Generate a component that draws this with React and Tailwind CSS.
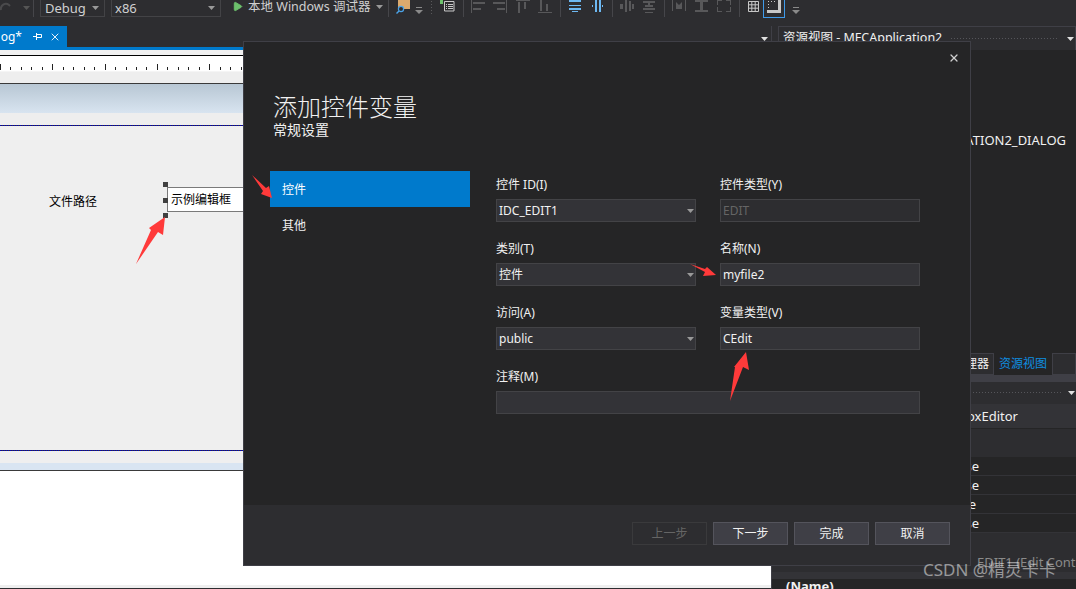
import React from 'react';
import { Play, X } from 'lucide-react';

const Caret = ({ className = '' }) => (
  <svg width="7" height="4" viewBox="0 0 7 4" className={className}>
    <path d="M0 0h7L3.500 4z" fill="currentColor" />
  </svg>
);

const Sep = ({ ml }) => <div className={`w-px h-[17px] bg-[#46464a] shrink-0 ${ml}`} />;

const OverflowCaret = ({ ml }) => (
  <svg width="8" height="8" viewBox="0 0 8 8" className={`shrink-0 mt-[7px] ${ml}`}>
    <path d="M1 0h6v1H1zM0 3h8L4 7z" fill="#8a8a8a" />
  </svg>
);

// toolbar layout glyphs, everything greyed out except the two blue ones
const Glyph = ({ ml, w = 14, color = '#58585a', children }) => (
  <svg width={w} height="17" viewBox={`0 0 ${w} 17`} fill={color} className={`shrink-0 ${ml}`}>
    {children}
  </svg>
);

const Gripper = ({ className = '' }) => (
  <div className={`h-[4px] bg-[radial-gradient(#55555a_1px,transparent_1px)] bg-[length:3px_3px] ${className}`} />
);

const Toolbar = () => (
  <div className="h-[26px] flex items-start text-[#d0d0d0] text-[13px] overflow-hidden">
    <svg width="12" height="12" viewBox="0 0 12 12" className="shrink-0 mt-[1px]" fill="none" stroke="#4a4a4c" strokeWidth="2">
      <path d="M1 9a5 5 0 0 1 8-5l1 1" />
    </svg>
    <Caret className="text-[#555] ml-[11px] mt-[6px] shrink-0" />
    <Sep ml="ml-[3px]" />
    <div className="ml-[6px] w-[65px] h-[17px] border border-[#434346] border-t-0 flex items-center justify-between px-[4px] shrink-0 leading-none">
      <span>Debug</span>
      <Caret className="text-[#999] mr-[1px]" />
    </div>
    <div className="ml-[6px] w-[110px] h-[17px] border border-[#434346] border-t-0 flex items-center justify-between px-[3px] shrink-0 leading-none">
      <span>x86</span>
      <Caret className="text-[#999] mr-[2px]" />
    </div>
    <Play size={11} className="ml-[11px] mt-[1px] shrink-0 text-[#6cc06c]" fill="#6cc06c" />
    <span className="ml-[5px] text-[12.500px] leading-[13px] whitespace-nowrap w-[122px] shrink-0">本地 Windows 调试器</span>
    <Caret className="ml-[6px] mt-[5px] text-[#999] shrink-0" />
    <Sep ml="ml-[5px]" />
    <svg width="14" height="15" viewBox="0 0 14 15" className="ml-[7px] shrink-0">
      <path d="M2 0h12v9H2z" fill="#dcaa6e" />
      <circle cx="5" cy="9" r="2.600" fill="#2d2d30" stroke="#4ba3e8" strokeWidth="1.200" />
      <path d="M3 11l-2.500 2.500" stroke="#4ba3e8" strokeWidth="1.400" />
    </svg>
    <OverflowCaret ml="ml-[5px]" />
    <svg width="5" height="17" viewBox="0 0 5 17" className="ml-[7px] shrink-0">
      {[1, 4, 7, 10, 13].map((y) => (
        <rect key={y} x="1" y={y} width="1" height="1" fill="#5a5a5c" />
      ))}
    </svg>
    <svg width="15" height="13" viewBox="0 0 15 13" className="ml-[5px] shrink-0">
      <path d="M0 0h3v4H0z" fill="#6cc06c" />
      <path d="M4.500 1.500h9.500v9.500H4.500z" fill="none" stroke="#c8c8c8" />
      <path d="M6 4h1v1H6zM8 4h5v1H8zM6 6h1v1H6zM8 6h5v1H8zM6 8h1v1H6zM8 8h5v1H8z" fill="#c8c8c8" />
    </svg>
    <Sep ml="ml-[8px]" />
    <Glyph ml="ml-[7px]"><path d="M0 0h1v13H0zM2 2h12v2H2zM2 8h8v2H2z" /></Glyph>
    <Glyph ml="ml-[8px]"><path d="M13 0h1v13h-1zM0 2h12v2H0zM4 8h8v2H4z" /></Glyph>
    <Glyph ml="ml-[9px]"><path d="M0 0h14v1H0zM2 2h2v11H2zM8 2h2v7H8z" /></Glyph>
    <Glyph ml="ml-[8px]"><path d="M0 12h14v1H0zM2 0h2v11H2zM8 4h2v7H8z" /></Glyph>
    <Sep ml="ml-[8px]" />
    <Glyph ml="ml-[8px]" w={12} color="#6db8f2"><path d="M0 0h12v2H0zM0 5h12v1H0zM0 8h12v2H0zM3 11h6v1H3z" /></Glyph>
    <Glyph ml="ml-[11px]" w={11} color="#6db8f2"><path d="M3 0h2v12H3zM7 0h2v12H7zM0 5h1v2H0zM10 5h1v2h-1z" /></Glyph>
    <Sep ml="ml-[9px]" />
    <Glyph ml="ml-[7px]"><path d="M0 4h3v5H0zM5 0h2v12H5zM9 1h2v10H9zM12 4h2v5h-2z" /></Glyph>
    <Glyph ml="ml-[9px]" w={12}><path d="M0 1h12v2H0zM5 3h2v2H5zM2 5h8v2H2zM0 8h12v2H0zM2 12h8v1H2z" /></Glyph>
    <Sep ml="ml-[9px]" />
    <Glyph ml="ml-[7px]"><path d="M0 0h1v11H0zM13 0h1v11h-1zM4 2l3 3 3-3v7H4z" /></Glyph>
    <Glyph ml="ml-[9px]"><path d="M0 0h13v2H0zM0 10h13v2H0zM5 2h3v8H5z" /></Glyph>
    <Glyph ml="ml-[8px]"><path d="M0 0h5v1H1v4H0zM9 0h5v5h-1V1H9zM0 7h1v4h4v1H0zM13 7h1v5H9v-1h4z" /></Glyph>
    <Sep ml="ml-[8px]" />
    <svg width="11" height="11" viewBox="0 0 11 11" className="ml-[8px] mt-[1px] shrink-0">
      <path d="M.5.500h10v10H.500zM.5 3.800h10M.5 7.200h10M3.800.500v10M7.200.500v10" fill="none" stroke="#c8c8c8" />
    </svg>
    <div className="ml-[4px] w-[22px] h-[18px] border border-[#3f9bea] border-t-0 flex items-start justify-center shrink-0">
      <svg width="14" height="13" viewBox="0 0 14 13">
        <path d="M0 10h11V0h3v13H0z" fill="#c8c8c8" />
        <path d="M1 1h1v1H1zM4 1h1v1H4zM7 1h1v1H7zM1 4h1v1H1zM1 7h1v1H1z" fill="#c8c8c8" />
      </svg>
    </div>
    <OverflowCaret ml="ml-[7px]" />
  </div>
);

const Ruler = () => (
  <svg width="771" height="15" viewBox="0 0 771 15" className="block">
    {Array.from({ length: 74 }).map((_, i) => {
      const long = i % 5 === 0;
      return <rect key={i} x={Math.round(i * 10.46)} y={long ? 8 : 11} width="1" height={long ? 6 : 3} fill="#222" />;
    })}
  </svg>
);

const DottedLine = () => (
  <div className="h-[1px] bg-[repeating-linear-gradient(90deg,#0000cc_0,#0000cc_1px,transparent_1px,transparent_2px)]" />
);

const Designer = () => (
  <div className="w-[771px] flex flex-col shrink-0">
    <div className="h-[21px] flex justify-between items-end">
      <div className="w-[67px] h-[21px] bg-[#007acc] text-white text-[12px] flex items-center justify-end pr-[6px] gap-[7px] overflow-hidden whitespace-nowrap">
        <span className="mr-[4px]">og*</span>
        <svg width="9" height="9" viewBox="0 0 9 9" fill="none" stroke="white" className="shrink-0">
          <path d="M3.500 1v7M3.500 2.500h5v3h-5M0 4.500h3.500" />
        </svg>
        <X size={12} strokeWidth={1.800} className="shrink-0" />
      </div>
      <Caret className="text-[#e0e0e0] mr-[3px] mb-[6px]" />
    </div>
    <div className="h-[3px] bg-[#007acc]" />
    <div className="h-[5px] bg-[#f0f0f0]" />
    <div className="h-[1px] bg-black" />
    <div className="h-[15px] bg-white"><Ruler /></div>
    <div className="h-[1px] bg-[#f5f5f5]" />
    <div className="h-[11px] bg-[#eeeeee]" />
    <div className="h-[1px] bg-[#3a3a3a]" />
    <div className="h-[29px] bg-gradient-to-b from-[#b8c7d4] to-[#d8e4f0]" />
    <div className="h-[12px] bg-[#eeeeee]" />
    <DottedLine />
    <div className="relative h-[324px] bg-[#efefef] text-[12px] text-black">
      <span className="absolute left-[49px] top-[66px] leading-[20px]">文件路径</span>
      <div className="absolute left-[167px] top-[61px] w-[120px] h-[25px] bg-white border border-[#7a7a7a] pl-[3px] leading-[23px]">示例编辑框</div>
      <div className="absolute left-[163px] top-[56px] w-[5px] h-[5px] bg-[#404040]" />
      <div className="absolute left-[163px] top-[72px] w-[5px] h-[5px] bg-[#404040]" />
      <div className="absolute left-[163px] top-[87px] w-[5px] h-[5px] bg-[#404040]" />
    </div>
    <DottedLine />
    <div className="h-[12px] bg-[#efefef]" />
    <div className="h-[7px] bg-[#d9e5f2]" />
    <div className="h-[1px] bg-[#3a3a3a]" />
    <div className="h-[114px] bg-white" />
    <div className="h-[3px] bg-[#efefef]" />
  </div>
);

const SidePanel = () => (
  <div className="flex-1 min-w-0 flex flex-col bg-[#2d2d30] text-[13px] text-[#f1f1f1] border-l border-[#3f3f46]">
    <div className="h-[24px] ml-[6px] border border-b-0 border-[#3f3f46] pl-[4px] pr-[1px] flex items-center text-[12.500px] whitespace-nowrap overflow-hidden">
      <span className="shrink-0">资源视图 - MFCApplication2</span>
      <Gripper className="flex-1 mx-[8px]" />
      <Caret className="text-[#e0e0e0] shrink-0" />
    </div>
    <div className="h-[303px] bg-[#252526] flex flex-col items-end pt-[80px] pr-[10px] text-[13px] whitespace-nowrap">
      <span className="leading-[20px]">IDD_MFCAPPLICATION2_DIALOG</span>
    </div>
    <div className="h-[22px] flex items-stretch justify-end text-[12px] whitespace-nowrap">
      <div className="border border-[#3f3f46] px-[4px] leading-[20px]">解决方案资源管理器</div>
      <div className="px-[5px] bg-[#252526] text-[#0e8ee0] leading-[22px]">资源视图</div>
      <div className="w-[24px] border border-[#3f3f46]" />
    </div>
    <div className="h-[7px] bg-[#3f3f46]" />
    <div className="h-[22px] bg-[#2d2d30] flex items-center pr-[1px] pl-[200px]">
      <Gripper className="flex-1 mr-[6px]" />
      <Caret className="text-[#e0e0e0] shrink-0" />
    </div>
    <div className="h-[25px] bg-[#333337] border-b border-[#252526] pr-[58px] flex items-center justify-end leading-none">
      <span>ToolboxEditor</span>
    </div>
    <div className="h-[28px]" />
    {['False', 'False', 'True', 'False'].map((v, i) => (
      <div key={i} className={`h-[19px] bg-[#252526] border-b border-[#333337] text-right text-[13px] leading-[18px] ${v === 'True' ? 'pr-[100px]' : 'pr-[97px]'}`}>
        {v}
      </div>
    ))}
    <div className="h-[21px]" />
    <div className="h-[18px] text-[#8a8a8a] text-[13px] pl-[205px] leading-[16px] whitespace-nowrap overflow-hidden">EDIT1 (Edit Control)</div>
    <div className="h-[7px] bg-[#333337]" />
    <div className="flex-1 bg-[#252526] pl-[14px] text-[13px] font-bold leading-[15px] overflow-hidden">(Name)</div>
  </div>
);

const Field = ({ label, value, select, disabled, className = '' }) => (
  <div className={`flex flex-col ${className}`}>
    <label className="h-[28px] pt-[5px] text-[12px] leading-[18px] text-[#f1f1f1]">{label}</label>
    <div className={`h-[23px] border border-[#434346] flex items-center justify-between pl-[2px] pr-[1px] text-[12px] leading-none ${disabled ? 'bg-[#2d2d30] text-[#656565]' : 'bg-[#333337] text-[#f1f1f1]'}`}>
      <span>{value}</span>
      {select && <Caret className="text-[#999]" />}
    </div>
  </div>
);

const DialogBtn = ({ children, disabled }) => (
  <button className={`w-[75px] h-[23px] border text-[12px] leading-none ${disabled ? 'border-[#3a3a3c] text-[#656565]' : 'border-[#54545c] bg-[#3f3f46] text-[#f1f1f1]'}`}>
    {children}
  </button>
);

const Dialog = () => (
  <div className="absolute left-[243px] top-[41px] w-[728px] h-[525px] bg-[#252526] border border-[#3f3f46] flex flex-col">
    <div className="h-[463px] relative">
      <button className="absolute right-[10px] top-[10px] text-[#d0d0d0]">
        <X size={12} strokeWidth={2.500} />
      </button>
      <div className="pl-[29px] pt-[48px] text-[#f1f1f1]">
        <h1 className="text-[24px] leading-[34px] font-light">添加控件变量</h1>
        <p className="text-[14px] leading-[20px] -mt-[4px]">常规设置</p>
      </div>
      <div className="flex mt-[31px] pl-[26px]">
        <div className="w-[200px] shrink-0 text-[12px] text-[#f1f1f1]">
          <div className="h-[36px] bg-[#007acc] text-white pl-[12px] leading-[38px]">控件</div>
          <div className="h-[36px] pl-[12px] leading-[38px]">其他</div>
        </div>
        <div className="ml-[26px] w-[424px] grid grid-cols-[200px_200px] gap-x-[24px] gap-y-[13px]">
          <Field label="控件 ID(I)" value="IDC_EDIT1" select />
          <Field label="控件类型(Y)" value="EDIT" disabled />
          <Field label="类别(T)" value="控件" select />
          <Field label="名称(N)" value="myfile2" />
          <Field label="访问(A)" value="public" select />
          <Field label="变量类型(V)" value="CEdit" />
          <Field label="注释(M)" value="" className="col-span-2" />
        </div>
      </div>
    </div>
    <div className="flex-1 bg-[#2d2d30] flex justify-end gap-[6px] pt-[17px] pr-[20px]">
      <DialogBtn disabled>上一步</DialogBtn>
      <DialogBtn>下一步</DialogBtn>
      <DialogBtn>完成</DialogBtn>
      <DialogBtn>取消</DialogBtn>
    </div>
  </div>
);

// red annotation arrows drawn on top of the screenshot
const Arrows = () => (
  <svg width="1076" height="589" viewBox="0 0 1076 589" className="absolute inset-0 pointer-events-none">
    <g fill="#ff3a3a">
      <polygon points="136,264 151,230 149,228 165,217 163,235 158,232" />
      <polygon points="252,175 266,188 269,186 272,198 261,194 263,191" />
      <polygon points="690,264 705,269 707,267 716,275 703,276 705,272" />
      <polygon points="730,401 735,367 734,367 746,352 749,370 743,367" />
    </g>
  </svg>
);

export default function App() {
  return (
    <div className="relative w-[1076px] h-[589px] overflow-hidden bg-[#2d2d30] font-['Noto_Sans','Noto_Sans_CJK_SC',sans-serif]">
      <Toolbar />
      <div className="flex h-[563px]">
        <Designer />
        <SidePanel />
      </div>
      <Dialog />
      <Arrows />
      <div className="absolute left-[923px] top-[559px] text-[17px] leading-[22px] text-white/50 whitespace-nowrap">CSDN @精灵卡卡</div>
    </div>
  );
}
